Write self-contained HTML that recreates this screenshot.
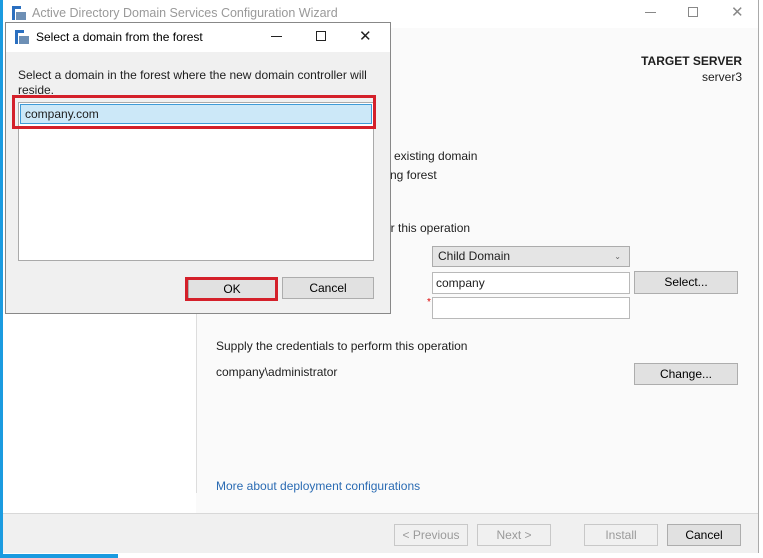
<!DOCTYPE html>
<html><head><style>
*{margin:0;padding:0;box-sizing:border-box}
body{width:763px;height:558px;position:relative;overflow:hidden;background:#fff;font-family:"Liberation Sans",sans-serif;font-size:12px;color:#1e1e1e}
.a{position:absolute}
.btn{position:absolute;background:#e1e1e1;border:1px solid #adadad;text-align:center;line-height:20px;font-size:12px;color:#000}
.dis{background:#f0f0f0;border-color:#c8c8c8;color:#9a9a9a}
.inp{position:absolute;background:#fff;border:1px solid #b9b9b9;padding-left:3px;line-height:20px}
</style></head><body>
<div class="a" style="left:0;top:0;width:3px;height:558px;background:#1b9be0"></div>
<div class="a" style="left:0;top:554px;width:118px;height:4px;background:#1b9be0"></div>
<div class="a" style="left:3px;top:0;width:756px;height:553px;background:#fafafa;border-right:1px solid #aaa"></div>
<div class="a" style="left:3px;top:0;width:755px;height:28px;background:#fff"></div>
<div class="a" style="left:3px;top:28px;width:193px;height:485px;background:#fff"></div>
<svg class="a" style="left:11px;top:5px" width="16" height="16"><rect x="1" y="1" width="3" height="14" fill="#2a6fc0"/><rect x="1" y="1" width="9" height="3" fill="#2a6fc0"/><rect x="5" y="7" width="10" height="8" fill="#6d8fb5"/></svg>
<div class="a" style="left:32px;top:6px;color:#999;font-size:12.5px">Active Directory Domain Services Configuration Wizard</div>
<div class="a" style="left:645px;top:12px;width:11px;height:1px;background:#888"></div>
<div class="a" style="left:688px;top:7px;width:10px;height:10px;border:1px solid #888"></div>
<div class="a" style="left:731px;top:3px;color:#888;font-size:15px">✕</div>
<div class="a" style="right:21px;top:53px;font-weight:bold;text-align:right;line-height:16px">TARGET SERVER<br><span style="font-weight:normal">server3</span></div>
<div class="a" style="left:196px;top:300px;width:1px;height:193px;background:#ddd"></div>
<div class="a" style="left:384px;top:149px">n existing domain</div>
<div class="a" style="left:384px;top:168px">ting forest</div>
<div class="a" style="left:384px;top:221px">or this operation</div>
<div class="a" style="left:432px;top:246px;width:198px;height:21px;background:#e5e5e5;border:1px solid #acacac;padding-left:5px;line-height:19px">Child Domain<span style="position:absolute;right:8px;font-size:8px;color:#666">⌄</span></div>
<div class="inp" style="left:432px;top:272px;width:198px;height:22px">company</div>
<div class="btn" style="left:634px;top:271px;width:104px;height:23px">Select...</div>
<div class="a" style="left:427px;top:297px;color:#d00;font-size:10px">*</div>
<div class="inp" style="left:432px;top:297px;width:198px;height:22px"></div>
<div class="a" style="left:216px;top:339px">Supply the credentials to perform this operation</div>
<div class="a" style="left:216px;top:365px">company\administrator</div>
<div class="btn" style="left:634px;top:363px;width:104px;height:22px">Change...</div>
<div class="a" style="left:216px;top:479px;color:#2a6bb3">More about deployment configurations</div>
<div class="a" style="left:3px;top:513px;width:755px;height:40px;background:#f0f0f0;border-top:1px solid #d8d8d8"></div>
<div class="btn dis" style="left:394px;top:524px;width:74px;height:22px">&lt; Previous</div>
<div class="btn dis" style="left:477px;top:524px;width:74px;height:22px">Next &gt;</div>
<div class="btn dis" style="left:584px;top:524px;width:74px;height:22px">Install</div>
<div class="btn" style="left:667px;top:524px;width:74px;height:22px">Cancel</div>
<!-- dialog -->
<div class="a" style="left:5px;top:22px;width:386px;height:292px;background:#f0f0f0;border:1px solid #888"></div>
<div class="a" style="left:6px;top:23px;width:384px;height:29px;background:#fff"></div>
<svg class="a" style="left:14px;top:29px" width="16" height="16"><rect x="1" y="1" width="3" height="14" fill="#2a6fc0"/><rect x="1" y="1" width="9" height="3" fill="#2a6fc0"/><rect x="5" y="7" width="10" height="8" fill="#6d8fb5"/></svg>
<div class="a" style="left:36px;top:30px;color:#000">Select a domain from the forest</div>
<div class="a" style="left:271px;top:36px;width:11px;height:1px;background:#222"></div>
<div class="a" style="left:316px;top:31px;width:10px;height:10px;border:1px solid #222"></div>
<div class="a" style="left:359px;top:27px;color:#222;font-size:15px">✕</div>
<div class="a" style="left:18px;top:68px;width:370px;line-height:15px">Select a domain in the forest where the new domain controller will reside.</div>
<div class="a" style="left:18px;top:102px;width:356px;height:159px;background:#fff;border:1px solid #aaa"></div>
<div class="a" style="left:20px;top:104px;width:352px;height:20px;background:#cce8f8;border:1px solid #3e9bd8;padding-left:4px;line-height:18px">company.com</div>
<div class="a" style="left:12px;top:95px;width:364px;height:34px;border:3px solid #d4202a"></div>
<div class="btn" style="left:188px;top:278px;width:88px;height:21px">OK</div>
<div class="a" style="left:185px;top:277px;width:93px;height:24px;border:3px solid #d4202a"></div>
<div class="btn" style="left:282px;top:277px;width:92px;height:22px">Cancel</div>
</body></html>
